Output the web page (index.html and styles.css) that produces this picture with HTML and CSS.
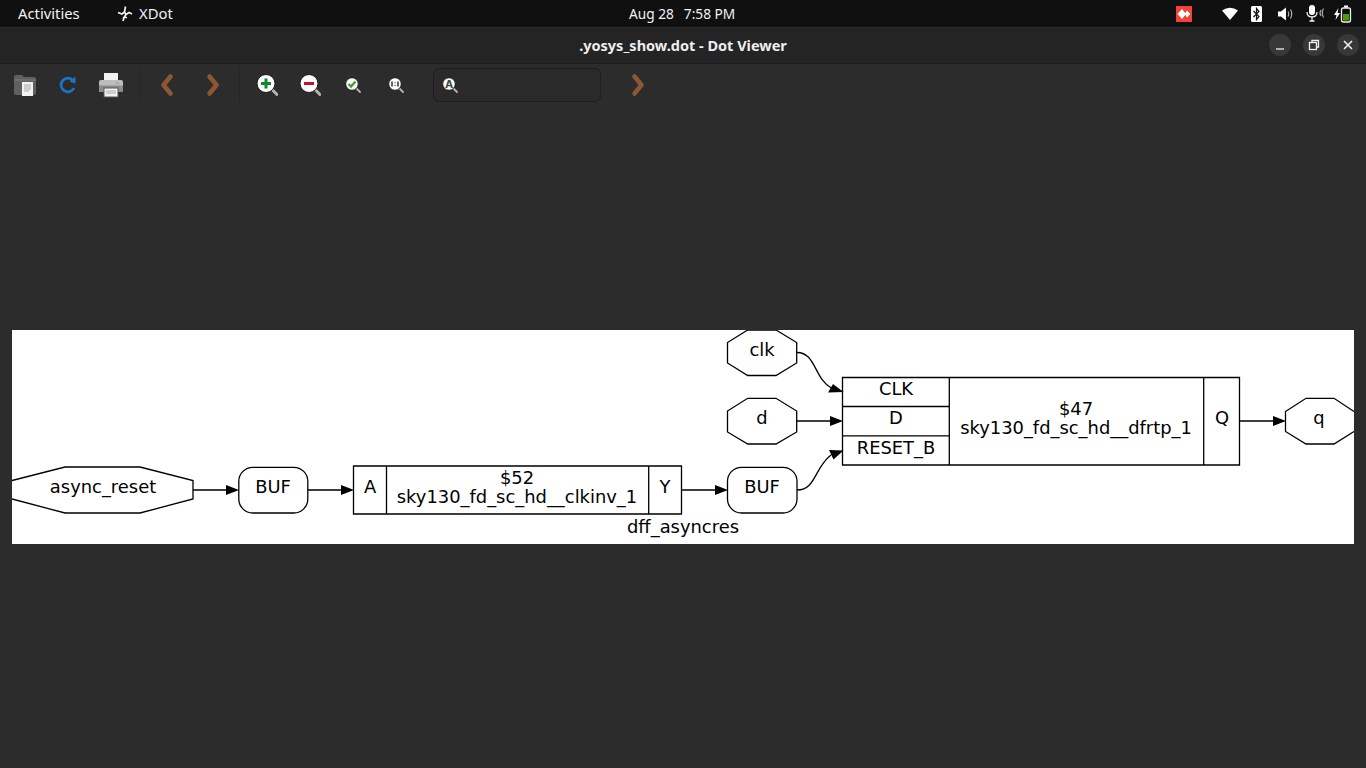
FILE: index.html
```html
<!DOCTYPE html>
<html lang="en">
<head>
<meta charset="utf-8">
<title>.yosys_show.dot - Dot Viewer</title>
<link rel="stylesheet" href="styles.css">
</head>
<body>
<div class="topbar">
  <div class="top-left">
    <span class="activities">Activities</span>
    <span class="app">
      <svg class="app-icon" width="17" height="18" viewBox="0 0 17 18"><path class="ico-w thick" d="M1 7.500 5 9 7.500 7 8.500 1.500M7.500 7l1.500 2.500-2 3-1 3.500M9 9.500l3-2 3 1.500M9 9.500l-2 3h3"/></svg>
      <span>XDot</span>
    </span>
  </div>
  <div class="clock"><span>Aug 28</span><span>7:58 PM</span></div>
  <div class="tray">
    <svg class="t-app" width="16" height="16" viewBox="0 0 16 16"><rect width="16" height="16" class="red"/><path class="white" d="M6 3 10 8l-4 5L1.500 8zM11 4.500 14.500 8 11 11.500 8.500 8z"/></svg>
    <svg class="t-wifi" width="16" height="13" viewBox="0 0 16 13"><path class="white" d="M0 3.500Q8-2 16 3.500L8 13z"/></svg>
    <svg class="t-bt" width="11" height="16" viewBox="0 0 11 16"><rect width="11" height="16" rx="1.500" class="white"/><path class="ico-k" d="M2.500 5 8 10.500 5.500 13.500V2.500L8 5.500 2.500 11"/></svg>
    <svg class="t-vol" width="15" height="14" viewBox="0 0 15 14"><path class="white" d="M0 4.500h3L8 .5v13L3 9.500H0z"/><path class="ico-g" d="M10 4.500q1.500 2.500 0 5M12.500 2.500q2.500 4.500 0 9"/></svg>
    <svg class="t-mic" width="18" height="17" viewBox="0 0 18 17"><rect x="3" y="0" width="6" height="10" rx="3" class="white"/><path class="ico-w" d="M1 7q0 5 5 5t5-5M6 12v4M3.500 16h5"/><path class="ico-g" d="M15 5q-2 3 0 6M17.500 3.500q-2.500 4.500 0 9"/></svg>
    <svg class="t-bat" width="18" height="18" viewBox="0 0 18 18"><path class="white" d="M4.500 3 0 10h2.500L1.500 15 6 8H3.500z"/><rect x="7.500" y="3" width="9" height="14" rx="2" class="ico-w"/><rect x="10" y="0.500" width="4" height="2" class="white"/><rect x="9" y="9" width="6" height="6.500" class="green"/></svg>
  </div>
</div>

<header class="titlebar">
  <div class="title">.yosys_show.dot - Dot Viewer</div>
  <div class="win-btns">
    <span class="win-btn"><svg width="12" height="12" viewBox="0 0 12 12"><path class="ico-w" d="M2 10h8"/></svg></span>
    <span class="win-btn"><svg width="12" height="12" viewBox="0 0 12 12"><path class="ico-w" d="M4 3V1.500h6.500V8H9"/><rect x="1.500" y="3.500" width="7" height="7" class="ico-w"/></svg></span>
    <span class="win-btn"><svg width="12" height="12" viewBox="0 0 12 12"><path class="ico-w2" d="M2 2l8 8M10 2l-8 8"/></svg></span>
  </div>
</header>

<nav class="toolbar">
  <span class="tool"><svg width="24" height="24" viewBox="0 0 24 24">
    <path class="folder-back" d="M1 4q0-2 2-2h6l2 2h10q2 0 2 2v14q0 2-2 2H3q-2 0-2-2z"/>
    <path class="folder-line" d="M1 7h22"/>
    <rect x="9" y="9" width="11" height="14" class="paper"/>
    <path class="paper-lines" d="M11 12h7M11 14h7M11 16h7M11 18h5"/>
  </svg></span>
  <span class="tool"><svg width="20" height="20" viewBox="0 0 20 20">
    <path class="refresh" d="M15 5.500A6.800 6.800 0 1 0 16 13"/>
    <path class="refresh-head" d="M11.500 6.500 17.500 1.500 17.500 8.500z"/>
  </svg></span>
  <span class="tool"><svg width="26" height="26" viewBox="0 0 26 26">
    <rect x="6" y="1" width="14" height="8" class="paper"/>
    <path class="printer" d="M3 8h20q2 0 2 2v8q0 2-2 2H1V10q0-2 2-2z"/>
    <path class="printer-band" d="M1 13.500h24V18q0 2-2 2H1z"/>
    <rect x="6" y="16" width="14" height="9" class="paper paper-edge"/>
    <path class="paper-lines" d="M8 19h10M8 21h10"/>
    <path class="dot-r" d="M18 11h1.500"/><path class="dot-y" d="M20.200 11h1.300"/>
  </svg></span>
  <span class="sep sep-a"></span>
  <span class="tool nav"><svg width="16" height="24" viewBox="0 0 16 24"><path class="chev" d="M11.500 3.500 4.500 12l7 8.500"/></svg></span>
  <span class="tool nav"><svg width="16" height="24" viewBox="0 0 16 24"><path class="chev" d="M4.500 3.500l7 8.500-7 8.500"/></svg></span>
  <span class="sep sep-b"></span>
  <span class="tool"><svg width="24" height="24" viewBox="-2 -0.5 24 24">
    <path class="handle" d="M15 15l6 6"/><circle cx="10" cy="10" r="9" class="lens"/>
    <path class="plus" d="M10 5v10M5 10h10"/>
  </svg></span>
  <span class="tool"><svg width="24" height="24" viewBox="-2 -0.5 24 24">
    <path class="handle" d="M15 15l6 6"/><circle cx="10" cy="10" r="9" class="lens"/>
    <path class="minus" d="M5 10h10"/>
  </svg></span>
  <span class="tool"><svg width="18" height="18" viewBox="-1 0 18 18">
    <path class="handle thin" d="M11 11l5 5"/><circle cx="8" cy="8" r="6.300" class="lens"/>
    <path class="check" d="M4.500 8 7 10.500 11.500 5.500"/>
  </svg></span>
  <span class="tool"><svg width="18" height="18" viewBox="-1 0 18 18">
    <path class="handle thin" d="M11 11l5 5"/><circle cx="8" cy="8" r="6.300" class="lens"/>
    <path class="oneone" d="M5 5.500v5M11 5.500v5M8 6.500v.8M8 9v.8"/>
  </svg></span>
  <div class="entry">
    <svg width="18" height="18" viewBox="0 0 18 18">
      <path class="handle thin" d="M11 11l5 5"/><circle cx="8" cy="8" r="6.300" class="lens"/>
      <text x="8" y="11.500" class="entry-a">A</text>
    </svg>
  </div>
  <span class="tool nav-last"><svg width="16" height="24" viewBox="0 0 16 24"><path class="chev" d="M4.500 3.500l7 8.500-7 8.500"/></svg></span>
</nav>

<main class="viewer">
  <svg class="graph" width="1342" height="214" viewBox="12 330 1342 214">
    <path class="edge" d="M193 490H226M308 490H341M682 490H715M797 421H830M1239 421H1273"/>
    <path class="edge" d="M797 352.500C816 352.500 814 379 832 388.500"/>
    <path class="edge" d="M797 490C816 490 814 468 831 455"/>
    <path class="head" d="M226 485 239 490 226 495zM341 485 354 490 341 495zM715 485 728 490 715 495zM830 416 843 421 830 426zM1273 416 1286 421 1273 426z"/>
    <path class="head" d="M833 384 843.500 392 828 392.500z"/>
    <path class="head" d="M829 450 843.500 450.500 833.500 459.500z"/>

    <path class="shape" d="M12 480.500 65 467H140L193 480.500V499L140 513H65L12 499"/>
    <rect class="shape" x="238.800" y="467.300" width="69" height="45.700" rx="14"/>
    <rect class="shape" x="727.500" y="467.300" width="69.500" height="45.700" rx="14"/>
    <path class="shape" d="M747.700 330H776L796.700 342.500V363L776 375.500H747.700L727.500 363V342.500z"/>
    <path class="shape" d="M747.700 398.300H776L796.700 411V432L776 444H747.700L727.500 432V411z"/>
    <path class="shape" d="M1354 411.500 1334 398.300H1306L1285.500 411.500V431.500L1306 444H1334L1354 431.500"/>

    <path class="shape" d="M353.500 466H681.500V514H353.500zM386.500 466V514M648.700 466V514"/>
    <path class="shape" d="M842.500 377.500H1239.500V465H842.500zM949.300 377.500V465M1203.700 377.500V465M842.500 406.500H949.300M842.500 435.800H949.300"/>

    <text class="lbl" x="103" y="493">async_reset</text>
    <text class="lbl" x="273" y="493">BUF</text>
    <text class="lbl" x="370" y="493">A</text>
    <text class="lbl" x="517" y="484">$52</text>
    <text class="lbl" x="517" y="503">sky130_fd_sc_hd__clkinv_1</text>
    <text class="lbl" x="665" y="493">Y</text>
    <text class="lbl" x="762" y="493">BUF</text>
    <text class="lbl" x="762" y="356">clk</text>
    <text class="lbl" x="762" y="424">d</text>
    <text class="lbl" x="896" y="395">CLK</text>
    <text class="lbl" x="896" y="424">D</text>
    <text class="lbl" x="896" y="454">RESET_B</text>
    <text class="lbl" x="1076" y="415">$47</text>
    <text class="lbl" x="1076" y="434">sky130_fd_sc_hd__dfrtp_1</text>
    <text class="lbl" x="1222" y="424">Q</text>
    <text class="lbl" x="1319" y="424">q</text>
    <text class="lbl" x="683" y="533">dff_asyncres</text>
  </svg>
</main>
</body>
</html>
```
FILE: styles.css
```css
* { box-sizing: border-box; }
html, body { margin: 0; padding: 0; height: 100%; }
body {
  width: 1366px;
  height: 768px;
  overflow: hidden;
  display: flex;
  flex-direction: column;
  background: #2c2c2c;
  font-family: "Noto Sans", "Open Sans", sans-serif;
  color: #fff;
}
svg { display: block; flex: none; }

/* top bar */
.topbar {
  height: 27px;
  flex: none;
  background: #101010;
  position: relative;
  display: flex;
  align-items: center;
  justify-content: space-between;
  font-size: 14.800px;
  color: #f2f2f2;
}
.top-left { display: flex; align-items: center; padding-left: 18px; }
.activities { width: 99px; padding-bottom: 2px; }
.app { display: flex; align-items: center; gap: 5px; }
.app span { padding-bottom: 2px; }
.clock {
  position: absolute;
  left: 629px;
  top: 0;
  height: 27px;
  display: flex;
  align-items: center;
  gap: 10px;
  font-size: 13.700px;
}
.tray { display: flex; align-items: center; padding-right: 14px; }
.t-wifi { margin-left: 30px; }
.t-bt { margin-left: 13px; }
.t-vol { margin-left: 16px; }
.t-mic { margin-left: 13px; }
.t-bat { margin-left: 10px; }

/* header */
.titlebar {
  height: 37px;
  flex: none;
  background: #242424;
  border-top: 1px solid #2b2b2b;
  border-bottom: 1px solid #1b1b1b;
  position: relative;
  display: flex;
  align-items: center;
  justify-content: center;
}
.title { font-size: 14.500px; font-weight: 700; color: #eeeeee; padding-bottom: 2px; }
.win-btns {
  position: absolute;
  right: 7px;
  top: 6px;
  display: flex;
  gap: 12px;
}
.win-btn {
  width: 22px;
  height: 22px;
  border-radius: 50%;
  background: #383838;
  display: flex;
  align-items: center;
  justify-content: center;
}

/* toolbar */
.toolbar {
  height: 41px;
  flex: none;
  background: #2c2c2c;
  display: flex;
  align-items: center;
  padding-left: 3px;
}
.tool {
  width: 43px;
  height: 41px;
  flex: none;
  display: flex;
  align-items: center;
  justify-content: center;
}
.nav { width: 46px; }
.nav-last { width: 44px; margin-left: 15px; }
.sep { width: 1px; height: 36px; background: #262626; flex: none; }
.sep-a { margin-left: 7px; margin-right: 4px; }
.sep-b { margin-left: 3px; margin-right: 4px; }
.entry {
  width: 168px;
  height: 34px;
  margin-left: 17px;
  background: #2a2a2a;
  border: 1px solid #1e1e1e;
  border-radius: 6px;
  display: flex;
  align-items: center;
  padding-left: 7px;
  flex: none;
}

/* viewer */
.viewer {
  flex: 1;
  display: flex;
  align-items: center;
  justify-content: center;
}
.graph { background: #fff; }

/* graph */
.edge { fill: none; stroke: #000; stroke-width: 1.300; }
.head { fill: #000; stroke: none; }
.shape { fill: none; stroke: #000; stroke-width: 1.300; }
.lbl {
  font-family: "DejaVu Sans", sans-serif;
  font-size: 17.900px;
  text-anchor: middle;
  fill: #000;
}

/* icon paints */
.white { fill: #fff; }
.red { fill: #f44336; }
.green { fill: #4e9a06; }
.ico-w { fill: none; stroke: #f0f0f0; stroke-width: 1.300; }
.thick { stroke-width: 1.700; }
.ico-w2 { fill: none; stroke: #f0f0f0; stroke-width: 1.600; }
.ico-k { fill: none; stroke: #111; stroke-width: 1.200; }
.ico-g { fill: none; stroke: #b0b0b0; stroke-width: 1.200; }
.folder-back { fill: #606060; }
.folder-line { stroke: #7a7a7a; stroke-width: 1; }
.paper { fill: #f2f2f2; }
.paper-edge { stroke: #555; stroke-width: 1; }
.paper-lines { stroke: #aaa; stroke-width: 1; fill: none; }
.refresh { fill: none; stroke: #1c74c4; stroke-width: 2.800; }
.refresh-head { fill: #1c74c4; }
.printer { fill: #bdbdbd; }
.printer-band { fill: #8c8c8c; }
.dot-r { stroke: #d9534f; stroke-width: 1; }
.dot-y { stroke: #e0a030; stroke-width: 1; }
.chev {
  fill: none;
  stroke: #8d5734;
  stroke-width: 4.600;
  stroke-linecap: round;
  stroke-linejoin: round;
}
.lens { fill: #fdfdfd; stroke: #1a1a1a; stroke-width: 1; }
.handle { stroke: #b5b5a8; stroke-width: 3; stroke-linecap: round; }
.thin { stroke-width: 1.800; }
.plus { stroke: #0b8a2b; stroke-width: 3; fill: none; }
.minus { stroke: #c8102e; stroke-width: 3; fill: none; }
.check { stroke: #3fa02a; stroke-width: 2.400; fill: none; }
.oneone { stroke: #333; stroke-width: 1.500; fill: none; }
.entry-a {
  font-family: "DejaVu Sans", sans-serif;
  font-size: 10px;
  font-weight: 700;
  text-anchor: middle;
  fill: #444;
}
```
